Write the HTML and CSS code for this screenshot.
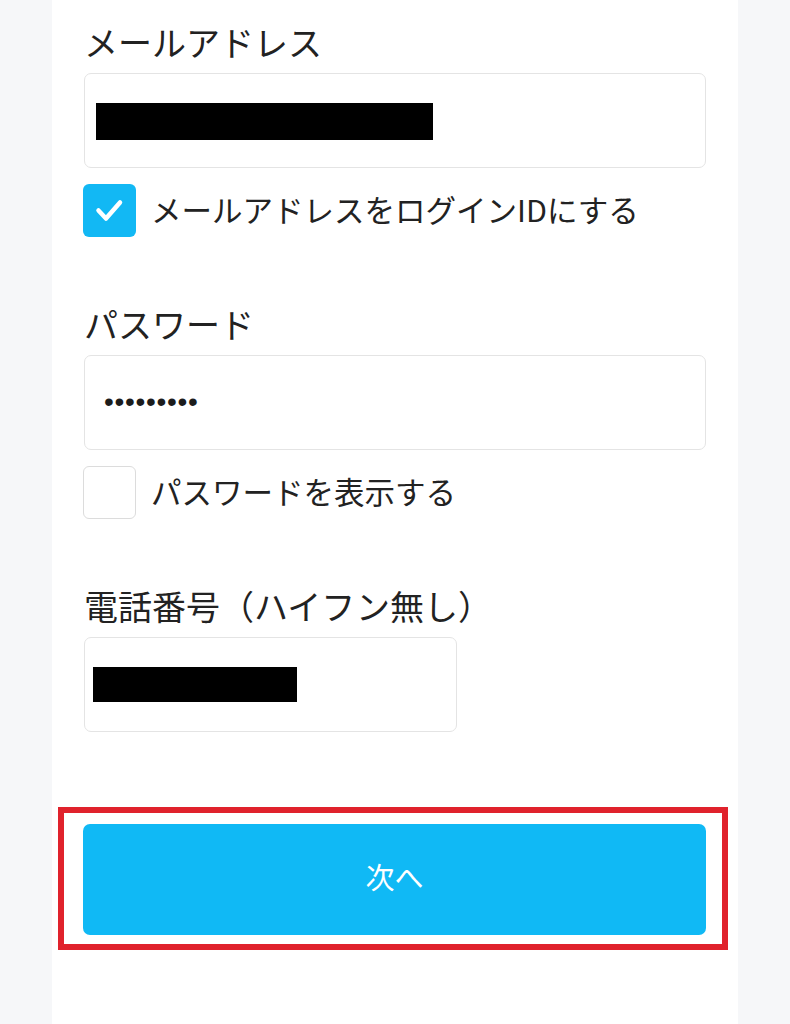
FILE: index.html
```html
<!DOCTYPE html>
<html lang="ja">
	<head>
		<meta charset="UTF-8">
		<meta name="viewport" content="width=device-width, initial-scale=1.0">
		<title>会員登録</title>
		<link rel="stylesheet" href="styles.css">
	</head>
	<body>
		<form class="panel">
			<div class="field">
				<div class="field-label">メールアドレス</div>
				<div class="text-box">
					<span class="redact redact-email"></span>
				</div>
				<label class="check-row">
					<span class="check is-on">
						<svg viewBox="0 0 53 53" width="53" height="53">
							<path d="M15.5 26.5 L23 34.5 L37 18.5" fill="none" stroke="#fff" stroke-width="4.5" stroke-linecap="round" stroke-linejoin="round"/>
						</svg>
					</span>
					<span class="check-text">メールアドレスをログインIDにする</span>
				</label>
			</div>
			<div class="field">
				<div class="field-label">パスワード</div>
				<div class="text-box">
					<span class="pw-dots">•••••••••</span>
				</div>
				<label class="check-row">
					<span class="check"></span>
					<span class="check-text">パスワードを表示する</span>
				</label>
			</div>
			<div class="field">
				<div class="field-label">電話番号（ハイフン無し）</div>
				<div class="text-box text-box-short">
					<span class="redact redact-phone"></span>
				</div>
			</div>
			<div class="mark-frame">
				<button type="button" class="next-btn">次へ</button>
			</div>
		</form>
	</body>
</html>
```

FILE: styles.css
```css
html, body {
	margin: 0;
	padding: 0;
	background-color: #f6f7f9;
}
body {
	font-family: "Noto Sans CJK JP", "Noto Sans", sans-serif;
	color: #222;
}
.panel {
	width: 686px;
	min-height: 1024px;
	box-sizing: border-box;
	margin-left: 52px;
	padding: 22px 32px 0;
	background-color: #fff;
}
.field + .field { margin-top: 67px; }
.field-label {
	font-size: 34px;
	line-height: 40px;
	margin-bottom: 11px;
	white-space: nowrap;
}
.text-box {
	height: 95px;
	box-sizing: border-box;
	border: 1.5px solid #e4e4e4;
	border-radius: 7px;
	padding: 0 11px;
	display: flex;
	align-items: center;
}
.text-box-short { width: 373px; padding-left: 8px; }
.redact {
	display: block;
	background-color: #000;
}
.redact-email { width: 337px; height: 37px; margin-top: 2px; }
.redact-phone { width: 204px; height: 35px; }
.pw-dots {
	font: 28px "Liberation Sans", sans-serif;
	letter-spacing: 0.7px;
	padding-left: 8px;
	margin-top: -2px;
	color: #1c1c1c;
}
.check-row {
	display: flex;
	align-items: center;
	margin-top: 16px;
	margin-left: -1px;
}
.check {
	width: 53px;
	height: 53px;
	flex: none;
	box-sizing: border-box;
	border: 1.5px solid #dcdcdc;
	border-radius: 6px;
	background-color: #fff;
}
.check.is-on {
	border: 0;
	background-color: #12b8f4;
}
.check svg { display: block; }
.check-text {
	font-size: 30.5px;
	line-height: 40px;
	margin: -3px 0 0 15px;
	white-space: nowrap;
}
.mark-frame {
	margin: 75px -22px 0 -26px;
	border: 6px solid #e0222c;
	padding: 11px 16px 9px 19px;
}
.next-btn {
	display: block;
	width: 100%;
	height: 111px;
	border: 0;
	border-radius: 7px;
	background-color: #10b9f5;
	color: #fff;
	font: 29px "Noto Sans CJK JP", sans-serif;
	padding: 0 0 8px;
}
```
